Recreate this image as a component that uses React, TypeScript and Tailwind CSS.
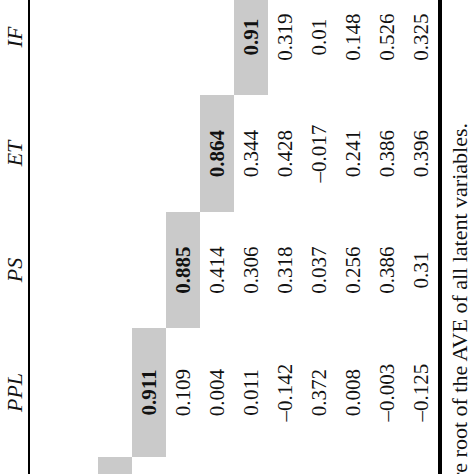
const columns = [
  { name: "", diag: 2, values: [] as string[] },
  { name: "PPL", diag: 3, values: ["0.911", "0.109", "0.004", "0.011", "–0.142", "0.372", "0.008", "–0.003", "–0.125"] },
  { name: "PS", diag: 4, values: ["0.885", "0.414", "0.306", "0.318", "0.037", "0.256", "0.386", "0.31"] },
  { name: "ET", diag: 5, values: ["0.864", "0.344", "0.428", "–0.017", "0.241", "0.386", "0.396"] },
  { name: "IF", diag: 6, values: ["0.91", "0.319", "0.01", "0.148", "0.526", "0.325"] },
];

const rows = Array.from({ length: 12 }, (_, i) => i);
const grid = "grid grid-cols-[17px_129px_116px_117px_116px]";

const App = () => {
  return (
    <div className="relative w-[474px] h-[474px] overflow-hidden bg-white text-[#111]" style={{ fontFamily: '"Liberation Serif", "Times New Roman", serif' }}>
      {/* the page is turned a quarter to the left */}
      <div className="absolute left-0 top-[474px] w-[495px] h-[474px] origin-top-left -rotate-90 flex flex-col">
        <div className={`${grid} h-[30px] border-b-2 border-black items-center`}>
          {columns.map((c) => (
            <div key={c.name} className="text-center italic text-[22px] leading-none pt-[2px]">
              {c.name}
            </div>
          ))}
        </div>
        <div className="flex flex-col border-b-4 border-black">
          {rows.map((r) => (
            <div key={r} className={`${grid} h-[34px]`}>
              {columns.map((c) => {
                const isDiag = r === c.diag;
                const val = r >= c.diag ? c.values[r - c.diag] : undefined;
                return (
                  <div
                    key={c.name}
                    className={`flex items-center justify-center text-[21px] leading-none ${isDiag ? "bg-[#cacaca] font-bold" : ""}`}
                  >
                    {val}
                  </div>
                );
              })}
            </div>
          ))}
        </div>
        <div className="mt-[6px] w-[351px] flex justify-end whitespace-nowrap text-[22px] leading-[24px]">
          <span>Note: Diagonal values are the square root of the AVE of all latent variables.</span>
        </div>
      </div>
    </div>
  );
};

export default App;
